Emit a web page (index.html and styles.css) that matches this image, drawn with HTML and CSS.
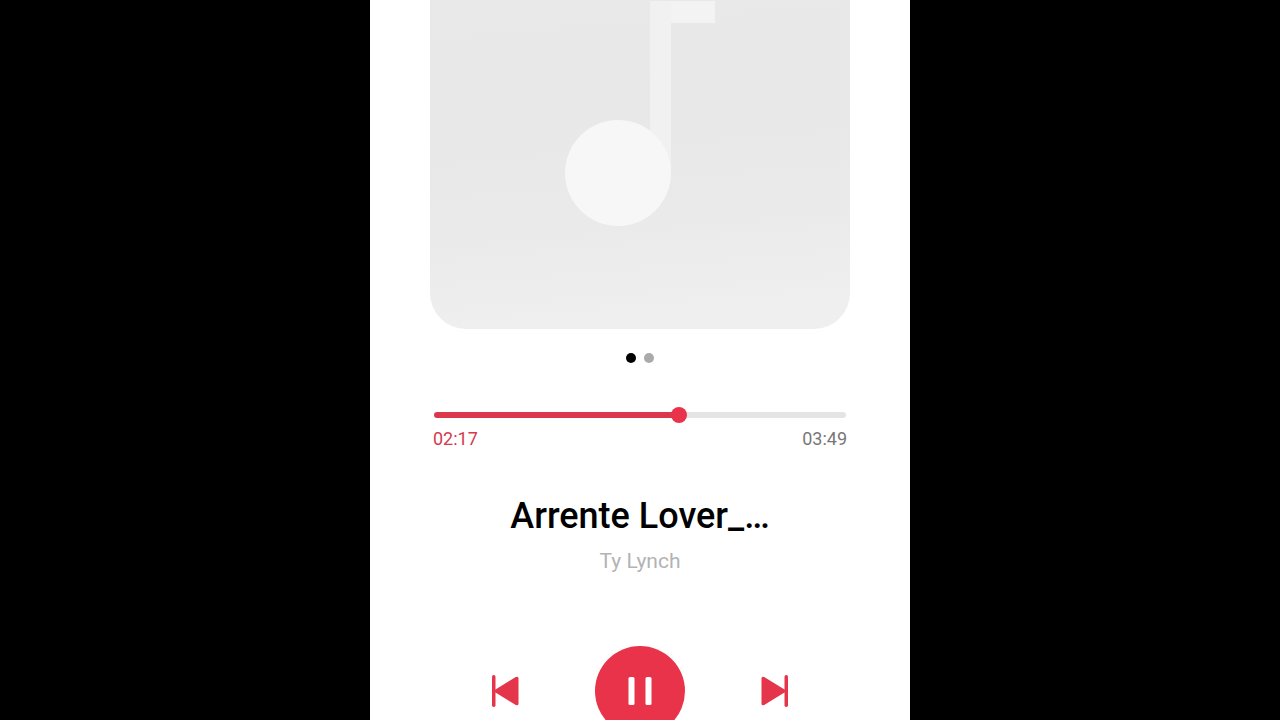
FILE: index.html
```html
<!DOCTYPE html>
<html lang="en">
<head>
  <meta charset="UTF-8" />
  <meta name="viewport" content="width=device-width, initial-scale=1.0" />
  <title>Music Player</title>
  <link rel="stylesheet" href="styles.css">
</head>
<body>
  <main class="player">
    <!-- Cover -->
    <div class="cover">
      <svg class="note" viewBox="0 0 150 226" aria-hidden="true">
        <path fill="#f1f1f1" d="M85 1H150V23H106V173H85Z" />
        <path fill="#f3f3f3" d="M106 1H150V23H106Z" />
        <circle fill="#f7f7f7" cx="53" cy="173" r="53" />
      </svg>
    </div>

    <div class="dots">
      <button class="dot active" aria-label="Cover"></button>
      <button class="dot" aria-label="Lyrics"></button>
    </div>

    <!-- Progress -->
    <div class="progress">
      <input class="seek" id="seek" type="range" min="0" max="229" value="137" aria-label="Seek">
      <div class="times">
        <label class="current" for="seek">02:17</label>
        <span class="total">03:49</span>
      </div>
    </div>

    <h1 class="title">Arrente Lover_…</h1>
    <p class="artist">Ty Lynch</p>

    <!-- Controls -->
    <div class="controls">
      <button class="skip" aria-label="Previous">
        <svg viewBox="0 0 28 32" width="28" height="32">
          <rect x="1" y="0" width="3.500" height="32" rx="1.700" />
          <path d="M4.500 14.600L24.800 2Q27.500 .8 27.500 3.600V28.400Q27.500 31.200 24.800 30L4.500 17.400Q3 16 4.500 14.600Z" />
        </svg>
      </button>
      <button class="play" aria-label="Pause">
        <svg viewBox="0 0 24 28" width="24" height="28">
          <rect x="0.500" y="0" width="6" height="28" rx="1.500" />
          <rect x="17.500" y="0" width="6" height="28" rx="1.500" />
        </svg>
      </button>
      <button class="skip" aria-label="Next">
        <svg viewBox="0 0 28 32" width="28" height="32">
          <rect x="23.500" y="0" width="3.500" height="32" rx="1.700" />
          <path d="M23.500 14.600L3.200 2Q.5 .8 .5 3.600V28.400Q.5 31.200 3.200 30L23.500 17.400Q25 16 23.500 14.600Z" />
        </svg>
      </button>
    </div>
  </main>
</body>
</html>
```
FILE: styles.css
```css
html, body {
  margin: 0;
  padding: 0;
  height: 100%;
  overflow: hidden;
  background: #000;
  font-family: Roboto, sans-serif;
}

.player {
  box-sizing: border-box;
  max-width: 540px;
  min-height: 100%;
  margin: 0 auto;
  padding: 0 60px;
  background: #fff;
}

button {
  border: none;
  padding: 0;
  background: none;
  cursor: pointer;
}

svg {
  display: block;
}

.cover {
  display: flex;
  justify-content: center;
  padding-bottom: 103px;
  border-radius: 0 0 36px 36px;
  background: linear-gradient(175deg, #e9e9e9 0%, #e8e8e8 35%, #eaeaea 65%, #efefef 92%);
}

.note {
  width: 150px;
  height: 226px;
}

.dots {
  display: flex;
  justify-content: center;
  gap: 8px;
  margin-top: 24px;
}

.dot {
  width: 10px;
  height: 10px;
  border-radius: 50%;
  background: #aaa;
}

.dot.active {
  background: #000;
}

.progress {
  margin-top: 44px;
  padding: 0 4px;
}

.seek {
  -webkit-appearance: none;
  appearance: none;
  display: block;
  width: 100%;
  height: 16px;
  margin: 0;
  background: none;
  cursor: pointer;
}

.seek::-webkit-slider-runnable-track {
  height: 6px;
  border-radius: 3px;
  background: linear-gradient(to right, #dc384c 60%, #e4e4e4 60%);
}

.seek::-webkit-slider-thumb {
  -webkit-appearance: none;
  width: 16px;
  height: 16px;
  margin-top: -5px;
  border-radius: 50%;
  background: #e9334a;
}

.times {
  display: flex;
  justify-content: space-between;
  margin: 4px -1px 0;
  font-size: 18px;
  line-height: 24px;
}

.current {
  color: #d43a4c;
}

.total {
  color: #777;
}

.title {
  margin: 42px 0 0;
  text-align: center;
  font-size: 36px;
  font-weight: 500;
  line-height: 46px;
  color: #000;
}

.artist {
  margin: 9px 0 0;
  text-align: center;
  font-size: 21px;
  line-height: 26px;
  color: #b3b3b3;
}

.controls {
  display: flex;
  justify-content: space-between;
  align-items: center;
  margin-top: 72px;
  padding: 0 61px;
}

.skip {
  fill: #e5354a;
}

.play {
  display: flex;
  justify-content: center;
  align-items: center;
  width: 90px;
  height: 90px;
  border-radius: 50%;
  background: #e9334a;
  fill: #fff;
}
```
